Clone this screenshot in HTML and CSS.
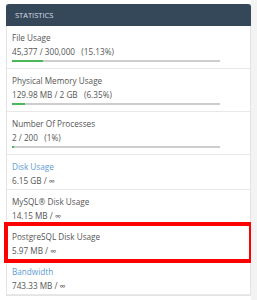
FILE: index.html
```html
<!DOCTYPE html>
<html lang="en">
<head>
    <meta charset="UTF-8">
    <title>Statistics</title>
    <link rel="stylesheet" href="styles.css">
</head>
<body>
    <div class="stats-panel">
        <div class="stats-header">STATISTICS</div>
        <div class="stat-row">
            <div class="stat-label">File Usage</div>
            <div class="stat-value">45,377 / 300,000 &nbsp; (15.13%)</div>
            <div class="stat-bar"><div class="stat-fill" style="width: 15.13%"></div></div>
        </div>
        <div class="stat-row">
            <div class="stat-label">Physical Memory Usage</div>
            <div class="stat-value">129.98 MB / 2 GB &nbsp; (6.35%)</div>
            <div class="stat-bar"><div class="stat-fill" style="width: 6.35%"></div></div>
        </div>
        <div class="stat-row">
            <div class="stat-label">Number Of Processes</div>
            <div class="stat-value">2 / 200 &nbsp; (1%)</div>
            <div class="stat-bar"><div class="stat-fill" style="width: 1%"></div></div>
        </div>
        <div class="stat-row">
            <div class="stat-label link">Disk Usage</div>
            <div class="stat-value">6.15 GB / ∞</div>
        </div>
        <div class="stat-row">
            <div class="stat-label">MySQL® Disk Usage</div>
            <div class="stat-value">14.15 MB / ∞</div>
        </div>
        <div class="stat-row highlight">
            <div class="stat-label">PostgreSQL Disk Usage</div>
            <div class="stat-value">5.97 MB / ∞</div>
        </div>
        <div class="stat-row">
            <div class="stat-label link">Bandwidth</div>
            <div class="stat-value">743.33 MB / ∞</div>
        </div>
    </div>
</body>
</html>
```

FILE: styles.css
```css
 html {
     background-color: #f3f3f3;
 }
 body {
     font-family: "Open Sans", Arial, sans-serif;
     margin: 0;
     width: 251px;
     min-height: 300px;
     background-color: white;
     color: #555;
     padding: 4px 0 0 6px;
     box-sizing: border-box;
 }
 .stats-panel {
     border: 1px solid #e4e4e4;
     border-top: none;
     background-color: white;
 }
 .stats-header {
     background-color: #35485a;
     color: #d5dde4;
     font-size: 7.5px;
     height: 22px;
     line-height: 22px;
     padding-left: 9px;
     border-radius: 3px 3px 0 0;
     margin: 0 -1px;
 }
 .stat-row {
     padding: 5px 5px 1px 5px;
     border-bottom: 1px solid #e8e8e8;
 }
 .stat-label {
     font-size: 8.2px;
     line-height: 14px;
 }
 .stat-label.link {
     color: #5b9bd5;
 }
 .stat-value {
     font-size: 8.2px;
     line-height: 14px;
 }
 .stat-bar {
     width: 208px;
     height: 2px;
     margin: 1px 0 5px 0;
     background-color: #cdcdcd;
 }
 .stat-fill {
     height: 100%;
     background-color: #4cb85a;
 }
 .highlight {
     outline: 4px solid #ff0000;
     outline-offset: -1px;
 }
```
